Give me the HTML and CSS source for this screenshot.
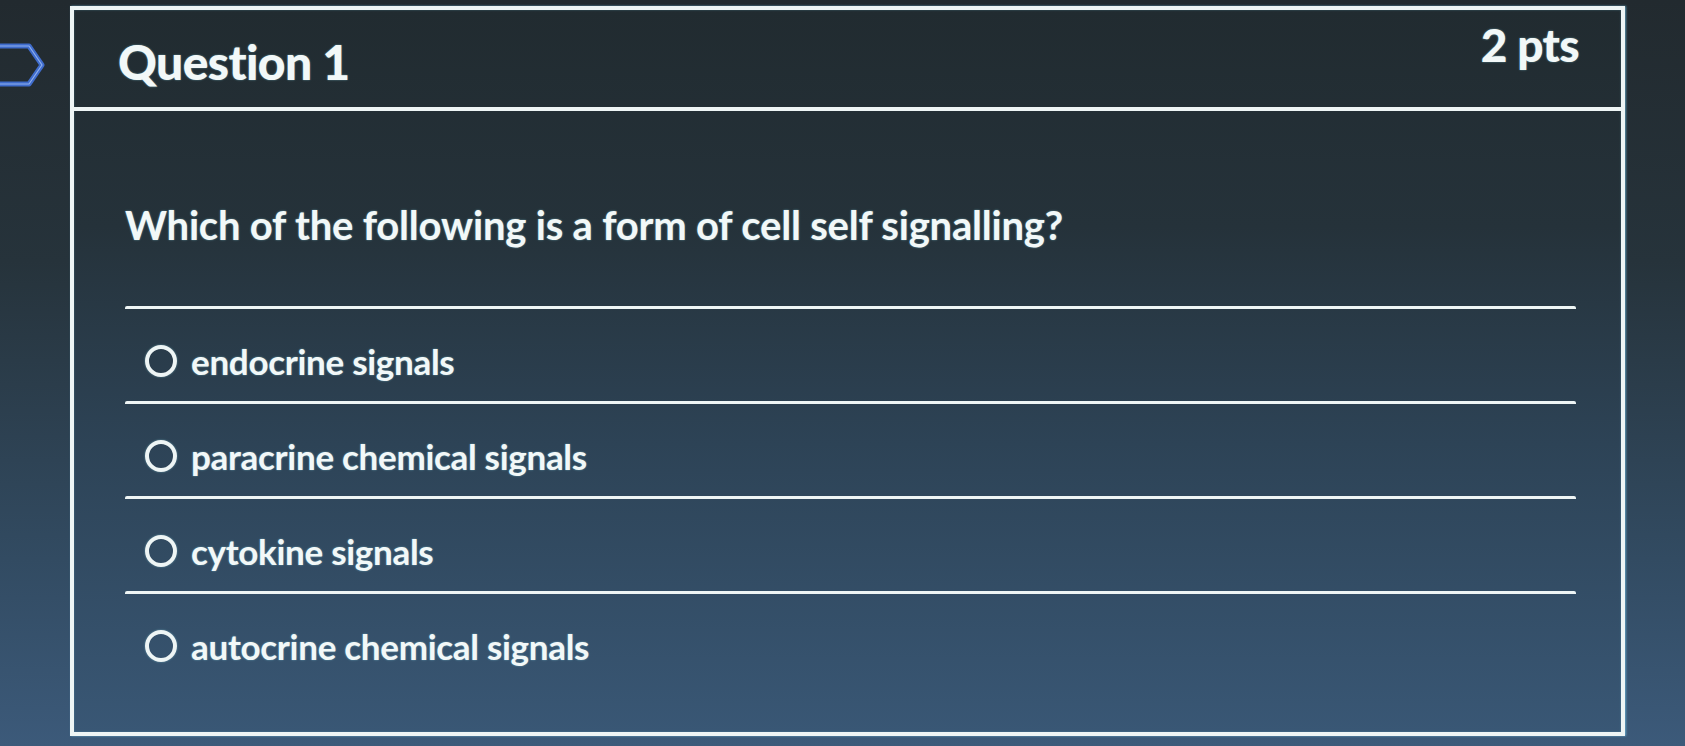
FILE: index.html
```html
<!DOCTYPE html>
<html lang="en">
<head>
<meta charset="utf-8">
<title>Question 1</title>
<link rel="stylesheet" href="styles.css">
</head>
<body>
<div class="page">
  <div class="flag-col">
    <svg class="flag" width="48" height="46" viewBox="0 0 48 46" aria-hidden="true">
      <path d="M-10 4 H29 L42 23 L29 42 H-10" fill="none" stroke="#3f6ccc" stroke-width="5" stroke-linejoin="round"/>
      <path d="M-10 4 H29 L42 23 L29 42 H-10" fill="none" stroke="#8fb0ee" stroke-width="1.2" stroke-linejoin="round"/>
    </svg>
  </div>
  <div class="card">
    <div class="card-header">
      <div class="q-title">Question 1</div>
      <div class="q-points">2 pts</div>
    </div>
    <div class="card-body">
      <div class="q-text">Which of the following is a form of cell self signalling?</div>
      <div class="answers">
        <div class="answer"><span class="radio"></span><span class="label">endocrine signals</span></div>
        <div class="answer"><span class="radio"></span><span class="label">paracrine chemical signals</span></div>
        <div class="answer"><span class="radio"></span><span class="label">cytokine signals</span></div>
        <div class="answer"><span class="radio"></span><span class="label">autocrine chemical signals</span></div>
      </div>
    </div>
  </div>
</div>
</body>
</html>
```

FILE: styles.css
```css
html, body {
  margin: 0;
  padding: 0;
}

body {
  width: 1685px;
  height: 746px;
  overflow: hidden;
  background: linear-gradient(180deg, #222a2f 0%, #26333b 35%, #324b62 75%, #3c5a7a 100%);
  font-family: Lato, "Open Sans", "Liberation Sans", sans-serif;
  color: #f2f8f8;
}

.page {
  display: flex;
  padding-top: 6px;
  height: 746px;
  box-sizing: border-box;
}

.flag-col {
  width: 70px;
  flex: none;
}

.flag {
  display: block;
  margin-top: 36px;
}

.card {
  width: 1555px;
  height: 730px;
  box-sizing: border-box;
  border: 4px solid #eef5f5;
  box-shadow: 1px 0 2px rgba(120, 200, 235, 0.7), inset 0 0 2px rgba(120, 200, 235, 0.4);
  background: linear-gradient(180deg, #212b30 0%, #25323a 30%, #2d4356 60%, #395775 100%);
  display: flex;
  flex-direction: column;
}

.card-header {
  height: 97px;
  flex: none;
  display: flex;
  align-items: center;
  justify-content: space-between;
  padding: 0 42px 0 44px;
  border-bottom: 4px solid #eef5f5;
}

.q-title,
.q-points {
  font-size: 48px;
  font-weight: 900;
  letter-spacing: -0.6px;
  text-shadow: 0 0 2px rgba(140, 215, 230, 0.6);
}

.q-title {
  margin-top: 6px;
}

.q-points {
  font-size: 46px;
  margin-top: -28px;
}

.card-body {
  padding: 91px 45px 0 51px;
}

.q-text {
  font-size: 40px;
  font-weight: 700;
  line-height: 46px;
  letter-spacing: -0.2px;
  text-shadow: 0 0 2px rgba(140, 215, 230, 0.6);
}

.answers {
  margin-top: 58px;
}

.answer {
  height: 95px;
  box-sizing: border-box;
  border-top: 3px solid #eef5f5;
  border-radius: 2px;
  display: flex;
  align-items: center;
  gap: 14px;
  padding: 12px 0 0 20px;
}

.radio {
  width: 24px;
  height: 24px;
  border: 4px solid #eef5f5;
  border-radius: 50%;
  flex: none;
  box-shadow: 0 0 2px rgba(140, 215, 230, 0.6);
}

.label {
  font-size: 35px;
  font-weight: 700;
  letter-spacing: -0.3px;
  text-shadow: 0 0 2px rgba(140, 215, 230, 0.6);
}
```
